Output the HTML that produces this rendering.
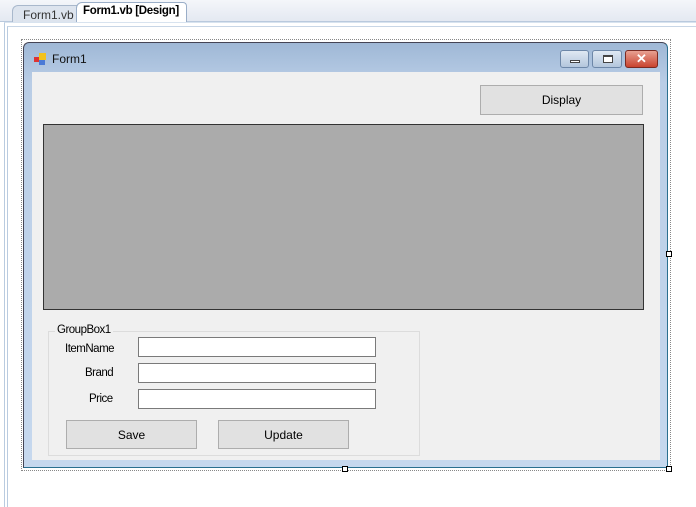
<!DOCTYPE html>
<html><head><style>
body{margin:0;width:696px;height:507px;overflow:hidden;background:#fff;font-family:"Liberation Sans",sans-serif;position:relative}
.a{position:absolute;box-sizing:border-box;white-space:nowrap}
.btn{background:#e1e1e1;border:1px solid #adadad;font-size:12px;text-align:center;color:#000}
.tb{background:#fff;border:1px solid #7a7a7a}
.lbl{font-size:11.5px;color:#000;letter-spacing:-0.5px}
</style></head><body>
<div class="a" style="left:0;top:0;width:696px;height:22px;background:linear-gradient(#f4f6fa,#e3e8f1)"></div>
<div class="a" style="left:0;top:21px;width:696px;height:1px;background:#b9c9dd"></div>
<div class="a" style="left:12px;top:5px;width:70px;height:17px;background:#dde4ee;border:1px solid #a9b8cc;border-bottom:none;border-radius:6px 4px 0 0;font-size:12px;padding:2px 0 0 10px;color:#333;overflow:hidden">Form1.vb</div>
<div class="a" style="left:76px;top:2px;width:111px;height:20px;background:#fff;border:1px solid #9aaec8;border-bottom:none;border-radius:6px 4px 0 0;font-size:11.5px;font-weight:bold;padding:2px 0 0 6px;color:#000;letter-spacing:-0.3px">Form1.vb [Design]</div>
<div class="a" style="left:4px;top:22px;width:692px;height:485px;border-left:1px solid #b9cbe0;border-top:1px solid #d8e3ef"></div>
<div class="a" style="left:7px;top:26px;width:689px;height:481px;border-left:1px solid #b9cbe0;border-top:1px solid #c8d6e6"></div>
<div class="a" style="left:21px;top:39px;width:650px;height:432px;border:1px dotted #888"></div>
<div class="a" style="left:23px;top:42px;width:645px;height:426px;background:linear-gradient(#9fb8d6,#b9cde6 40px,#c6d8ee);border:1px solid #445;border-radius:6px 6px 0 0;border-right-color:#2a6f8f;border-bottom-color:#2a6f8f"></div>
<svg class="a" style="left:34px;top:53px" width="14" height="13"><rect x="0" y="4" width="5" height="5" fill="#d33"/><rect x="5" y="0" width="7" height="7" fill="#f3c21d"/><rect x="5" y="7" width="6" height="5" fill="#4a7ad6"/></svg>
<div class="a" style="left:52px;top:52px;font-size:12px;color:#111">Form1</div>
<div class="a" style="left:560px;top:50px;width:29px;height:18px;border:1px solid #6d87a8;border-radius:3px;background:linear-gradient(#dfe8f3,#b3c6dc)"><div class="a" style="left:9px;top:9px;width:10px;height:3px;background:#fff;border:1px solid #444"></div></div>
<div class="a" style="left:592px;top:50px;width:30px;height:18px;border:1px solid #6d87a8;border-radius:3px;background:linear-gradient(#dfe8f3,#b3c6dc)"><div class="a" style="left:10px;top:4px;width:10px;height:8px;background:#fff;border:1px solid #444;border-top-width:2px"></div></div>
<div class="a" style="left:625px;top:50px;width:33px;height:18px;border:1px solid #7a2a22;border-radius:3px;background:linear-gradient(#e8a192,#c9432f);color:#fff;font-weight:bold;font-size:13px;text-align:center;line-height:16px">✕</div>
<div class="a" style="left:32px;top:72px;width:628px;height:388px;background:#f0f0f0"></div>
<div class="a btn" style="left:480px;top:85px;width:163px;height:30px;line-height:28px">Display</div>
<div class="a" style="left:43px;top:124px;width:601px;height:186px;background:#ababab;border:1px solid #333"></div>
<div class="a" style="left:48px;top:331px;width:372px;height:125px;border:1px solid #dcdcdc"></div>
<div class="a lbl" style="left:55px;top:324px;background:#f0f0f0;padding:0 2px">GroupBox1</div>
<div class="a lbl" style="left:65px;top:343px">ItemName</div>
<div class="a lbl" style="left:85px;top:367px">Brand</div>
<div class="a lbl" style="left:89px;top:393px">Price</div>
<div class="a tb" style="left:138px;top:337px;width:238px;height:20px"></div>
<div class="a tb" style="left:138px;top:363px;width:238px;height:20px"></div>
<div class="a tb" style="left:138px;top:389px;width:238px;height:20px"></div>
<div class="a btn" style="left:66px;top:420px;width:131px;height:29px;line-height:28px">Save</div>
<div class="a btn" style="left:218px;top:420px;width:131px;height:29px;line-height:28px">Update</div>
<div class="a" style="left:342px;top:466px;width:6px;height:6px;background:#fff;border:1px solid #000"></div>
<div class="a" style="left:666px;top:251px;width:6px;height:6px;background:#fff;border:1px solid #000"></div>
<div class="a" style="left:666px;top:466px;width:6px;height:6px;background:#fff;border:1px solid #000"></div>
</body></html>
